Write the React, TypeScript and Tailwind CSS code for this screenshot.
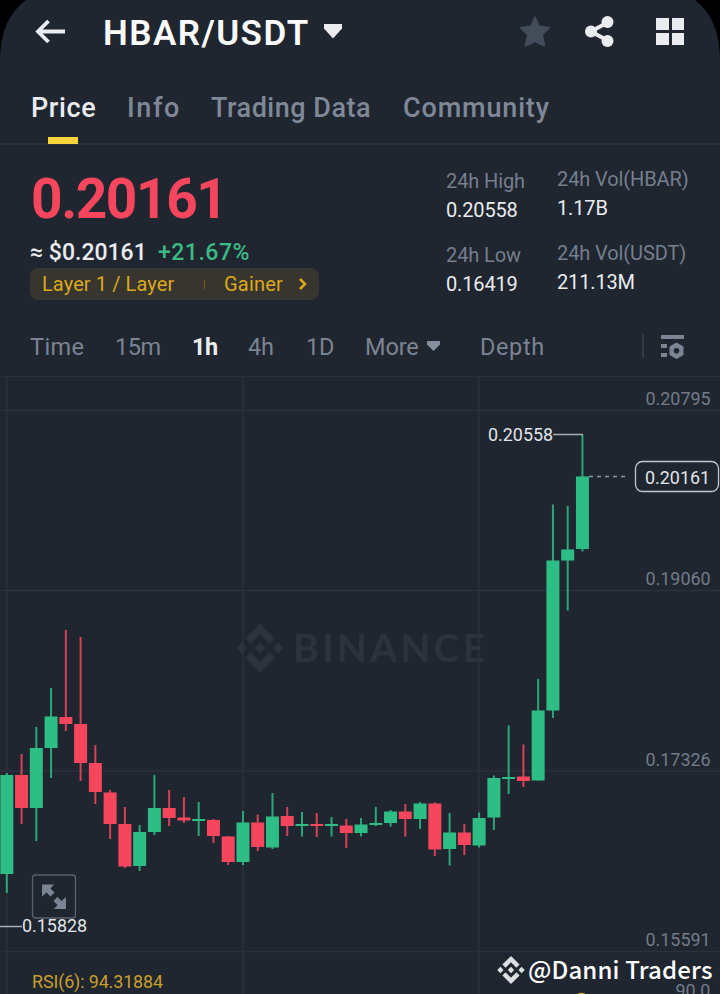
type Candle = [up: number, high: number, top: number, bottom: number, low: number];

const candles: Candle[] = [
  [1, 773, 775, 874, 893], [0, 754, 775, 808, 824], [1, 727, 748, 808, 841], [1, 688, 716.5, 748, 778],
  [0, 630, 717, 724, 731], [0, 637, 724, 763, 781], [0, 745, 763, 792, 804], [0, 790, 792.5, 824, 839],
  [0, 807, 824, 866.5, 868], [1, 825, 832, 866, 871], [1, 775, 808, 832, 835], [0, 790, 808, 818, 826],
  [0, 797, 817.5, 820.5, 823], [1, 802, 819, 821, 836], [0, 819, 820, 836, 843], [0, 836, 836.5, 862, 865],
  [1, 811, 822.5, 862, 865], [0, 814.5, 822.5, 847, 851], [1, 793, 816.5, 847.5, 849], [0, 807, 816, 826, 836],
  [1, 812, 824, 826, 836.5], [0, 813, 824, 826, 837], [1, 817, 824, 826, 836.5], [0, 819, 825.5, 833, 848],
  [1, 818, 824.5, 833, 836.5], [1, 807, 823, 825, 826], [1, 810, 811.5, 823, 826.5], [0, 804, 811.5, 819, 836.5],
  [1, 802, 803.5, 819, 829], [0, 802.5, 803.5, 849.5, 856], [1, 813, 832.5, 849, 865.5], [0, 824, 832.5, 845, 855],
  [1, 812.5, 818, 845.5, 847.5], [1, 775.5, 778, 817.5, 830], [1, 725.5, 777, 779, 794], [0, 744.5, 776.5, 781, 787],
  [1, 679, 710.5, 780.5, 780.5], [1, 504.5, 560.5, 710.5, 718], [1, 506, 549.5, 560.5, 610.5], [1, 434.5, 476.5, 549, 551.5],
];

function BinanceMark() {
  return (
    <>
      <path d="M24 0 39 15 33.5 20.5 24 11 14.500 20.5 9 15Z" />
      <path d="M24 49 39 34 33.5 28.500 24 38 14.500 28.500 9 34Z" />
      <path d="M24 19 29.500 24.500 24 30 18.500 24.500Z" />
      <path d="M5.500 19 11 24.500 5.500 30 0 24.500Z" />
      <path d="M42.500 19 48 24.500 42.500 30 37 24.500Z" />
    </>
  );
}

function Header() {
  return (
    <header className="flex h-[72px] items-start pl-[35px] pr-[36px]">
      <svg className="mt-[18px] h-[27px] w-[31px] shrink-0" viewBox="0 0 31 27" fill="none" stroke="#eaecef" strokeWidth="3.8">
        <path d="M30 13.500H3M13.500 3 3 13.500 13.500 24" />
      </svg>
      <h1 className="ml-[37px] mt-[16px] w-[207px] whitespace-nowrap text-[35px] font-semibold leading-[36px] tracking-[1.45px] text-[#fafafa]">HBAR/USDT</h1>
      <svg className="ml-[14px] mt-[24px] h-[15px] w-[18px] shrink-0" viewBox="0 0 18 15" fill="#eaecef">
        <path d="M0 0H18V4.500L9 14.500 0 4.500Z" />
      </svg>
      <svg className="ml-auto mt-[16px] h-[31px] w-[30px] shrink-0" viewBox="0 0 30 31" fill="#434c5a" stroke="#434c5a" strokeWidth="2" strokeLinejoin="round">
        <path d="M15 1.500 19 10.800 29 11.800 22 18.900 24.300 29.500 15 25 5.700 29.500 8 18.900 1 11.800 11 10.800Z" />
      </svg>
      <svg className="ml-[35px] mt-[16px] h-[31px] w-[29px] shrink-0" viewBox="0 0 29 31" fill="#eaecef">
        <path d="M22.500 6.500 6 15.500 22.500 24.500" fill="none" stroke="#eaecef" strokeWidth="4" />
        <circle cx="22.500" cy="6" r="6" /><circle cx="6" cy="15.500" r="6" /><circle cx="22.500" cy="25" r="6" />
      </svg>
      <div className="ml-[42px] mt-[18px] grid h-[27px] w-[28px] shrink-0 grid-cols-2 gap-[3px]">
        <i className="bg-[#eaecef]" /><i className="bg-[#eaecef]" /><i className="bg-[#eaecef]" /><i className="bg-[#eaecef]" />
      </div>
    </header>
  );
}

function Tabs() {
  return (
    <nav className="flex h-[73px] items-start whitespace-nowrap border-b-2 border-[#2a303b] pl-[31px] text-[27px] font-medium leading-[32px] text-[#7f8897]">
      <div className="flex w-[96px] flex-col text-[#eaecef]">
        <span className="pt-[20px] tracking-[0.6px]">Price</span>
        <span className="ml-[17px] mt-[13px] h-[7px] w-[30px] bg-[#f8d33a]" />
      </div>
      <span className="w-[84px] pt-[20px] tracking-[1.6px]">Info</span>
      <span className="w-[192px] pt-[20px] tracking-[0.5px]">Trading Data</span>
      <span className="pt-[20px] tracking-[0.85px]">Community</span>
    </nav>
  );
}

function Stat({ label, value }: { label: string; value: string }) {
  return (
    <div className="h-[74px] whitespace-nowrap">
      <div className="text-[20px] leading-[24px] tracking-[-0.1px] text-[#767f8d]">{label}</div>
      <div className="mt-[5px] text-[20px] leading-[24px] tracking-[-0.15px] text-[#eaecef]">{value}</div>
    </div>
  );
}

function Summary() {
  return (
    <section className="flex h-[174px] pl-[30px]">
      <div className="w-[416px] whitespace-nowrap">
        <div className="pl-px pt-[26px] text-[55px] font-bold leading-[56px] tracking-[-1.4px] text-[#f6465d]">0.20161</div>
        <div className="mt-[13px] flex text-[23px] font-medium leading-[26px]">
          <span className="w-[128px] text-[#eaecef]">≈ $0.20161</span>
          <span className="tracking-[0.5px] text-[#3bb986]">+21.67%</span>
        </div>
        <div className="mt-[2px] flex h-[32px] w-[289px] items-center rounded-[8px] bg-[#36352f] pl-[12px] text-[20px] leading-[30px] text-[#dca81c]">
          <span className="w-[162px] tracking-[0.1px]">Layer 1 / Layer</span>
          <span className="h-[9px] w-px bg-[#78611f]" />
          <span className="ml-[19px] w-[75px] tracking-[0.2px]">Gainer</span>
          <svg className="h-[12px] w-[8px]" viewBox="0 0 8 12" fill="none" stroke="#dca81c" strokeWidth="2.500"><path d="M1 1 6 6 1 11" /></svg>
        </div>
      </div>
      <div className="w-[111px] pt-[24px]">
        <Stat label="24h High" value="0.20558" />
        <Stat label="24h Low" value="0.16419" />
      </div>
      <div className="pt-[22px]">
        <Stat label="24h Vol(HBAR)" value="1.17B" />
        <Stat label="24h Vol(USDT)" value="211.13M" />
      </div>
    </section>
  );
}

function Intervals() {
  return (
    <nav className="flex h-[57px] items-center whitespace-nowrap pb-px pl-[30px] text-[23.500px] leading-[30px] text-[#7b8492]">
      <span className="w-[85px] tracking-[0.4px]">Time</span>
      <span className="w-[77px] tracking-[-0.4px]">15m</span>
      <span className="w-[56px] font-bold tracking-[-0.6px] text-[#eaecef]">1h</span>
      <span className="w-[58px] tracking-[-0.3px]">4h</span>
      <span className="w-[59px] tracking-[-0.2px]">1D</span>
      <span className="w-[62px] tracking-[-0.1px]">More</span>
      <svg className="mb-[3px] h-[10px] w-[13px]" viewBox="0 0 13 10" fill="#848e9c"><path d="M0 0H13V3.500L6.500 10 0 3.500Z" /></svg>
      <span className="ml-[40px] w-[162px] tracking-[0.6px]">Depth</span>
      <span className="mb-[3px] h-[24px] w-[2px] bg-[#343b46]" />
      <svg className="ml-[16px] h-[25px] w-[25px]" viewBox="0 0 25 25" fill="#7c8594">
        <path d="M1 0H24V4H1ZM1 9H7V13H1ZM1 18H7V22H1Z" />
        <path fillRule="evenodd" d="M16.500 7.500 23.500 11.500V20L16.500 24 9.500 20V11.500ZM16.500 13A2.800 2.800 0 1 0 16.500 18.600 2.800 2.800 0 0 0 16.500 13Z" />
      </svg>
    </nav>
  );
}

function Chart() {
  return (
    <svg className="block h-[618px] w-[720px] font-[Roboto,sans-serif]" viewBox="0 376 720 618" fontSize="17.900">
      <path d="M0 376.500H720M0 410.500H720M0 590.500H720M0 771H720M0 951.500H720M7 376V994M243 376V994M479 376V994" stroke="#2c323d" strokeWidth="1.500" />
      <g fill="#2d323e">
        <g transform="translate(236 623.500)"><BinanceMark /></g>
        <text x="293" y="662" fontFamily="Lato" fontSize="39" fontWeight="700" textLength="192">BINANCE</text>
      </g>
      {candles.map(([up, high, top, bottom, low], i) => {
        const x = 6.8 + i * 14.76;
        return (
          <g key={i} fill={up ? "#2ebd85" : "#f6465d"}>
            <rect x={x - 1} y={high} width="2" height={low - high} opacity="0.85" />
            <rect x={x - 6.5} y={top} width="13" height={bottom - top} />
          </g>
        );
      })}
      <g fill="#737b88">
        <text x="645.500" y="404.500">0.20795</text>
        <text x="645.500" y="584.500">0.19060</text>
        <text x="645.500" y="765.500">0.17326</text>
        <text x="645.500" y="945.500">0.15591</text>
        <text x="675.500" y="997">90.0</text>
      </g>
      <g fill="#e1e4e8">
        <text x="488" y="440.500">0.20558</text>
        <text x="22" y="931.500">0.15828</text>
        <path d="M553 434.500H583M0 926.500H22" stroke="#a9adb4" strokeWidth="1.700" />
      </g>
      <path d="M589 476.500H626" stroke="#9297a0" strokeWidth="1.500" strokeDasharray="4 4" />
      <rect x="635.500" y="461.500" width="83" height="30" rx="7" fill="#1f2630" stroke="#c3c7cd" strokeWidth="1.300" />
      <text x="645" y="483.500" fill="#e1e4e8">0.20161</text>
      <rect x="32.500" y="875" width="43" height="43" rx="3" fill="none" stroke="#596170" strokeWidth="1.300" />
      <g fill="#7b8493">
        <path d="M42 884.500H54L50.500 888.500 54.500 892.500 50.500 896.500 46.500 892.500 42 896.500Z" />
        <path d="M66 909H54L57.500 905 53.500 901 57.500 897 61.500 901 66 897Z" />
      </g>
      <text x="32" y="988" fill="#c79f2e" textLength="131">RSI(6): 94.31884</text>
      <path d="M577 994Q581 991.500 586 994Z" fill="#c79f2e" />
    </svg>
  );
}

export default function App() {
  return (
    <main className="relative h-[994px] w-[720px] overflow-hidden bg-[#1f2630] font-[Roboto,'Liberation_Sans',sans-serif]">
      <Header />
      <Tabs />
      <Summary />
      <Intervals />
      <Chart />
      <svg className="absolute left-0 top-0 h-[60px] w-[30px]" viewBox="0 0 30 60"><path d="M0 0H26Q1 18 0 58Z" /></svg>
      <svg className="absolute right-0 top-0 h-[60px] w-[30px]" viewBox="0 0 30 60"><path d="M30 0H5Q29 18 30 58Z" /></svg>
      <div className="absolute left-[497px] top-[952px] flex h-[36px] items-center whitespace-nowrap font-['Noto_Sans_CJK_SC',sans-serif] text-[24px] font-medium leading-[36px] text-white">
        <svg className="mr-[3px] h-[28px] w-[28px]" viewBox="0 0 48 49" fill="#dedfe1"><BinanceMark /></svg>
        <span className="-mt-[2px] tracking-[0.15px]">@Danni Traders</span>
      </div>
    </main>
  );
}
